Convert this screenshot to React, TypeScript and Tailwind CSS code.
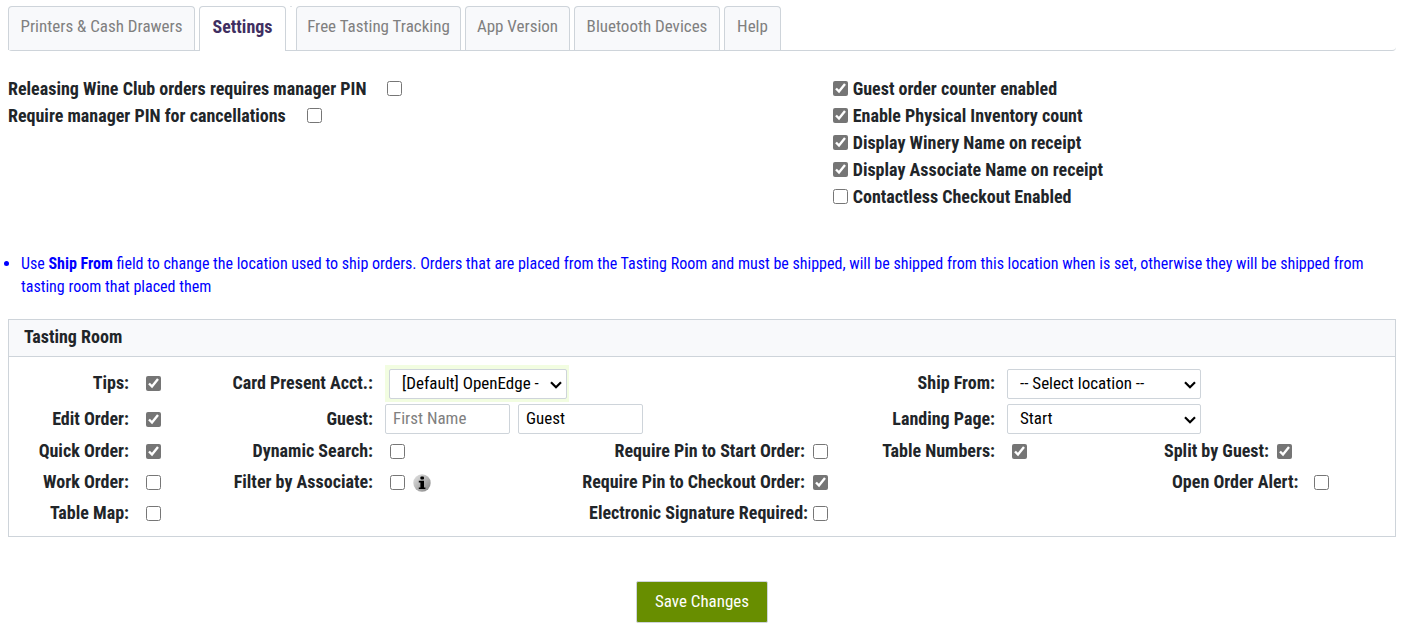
import { useState } from 'react';

const tabs = [
  { name: 'Printers & Cash Drawers', width: 'w-[187px]' },
  { name: 'Settings', width: 'w-[87px]' },
  { name: 'Free Tasting Tracking', width: 'w-[165px]' },
  { name: 'App Version', width: 'w-[105px]' },
  { name: 'Bluetooth Devices', width: 'w-[146px]' },
  { name: 'Help', width: 'w-[57px]' },
];

function Check({ id, checked = false }: { id: string; checked?: boolean }) {
  return <input id={id} type="checkbox" defaultChecked={checked} className="size-[15px] shrink-0 accent-[#757575]" />;
}

function Select({ id, option }: { id: string; option: string }) {
  return (
    <div className="relative w-full">
      <select id={id} className="block h-[30px] w-full appearance-none rounded-[2px] border border-[#ced4da] bg-white pr-6 pb-[3px] pl-3 text-[17px] text-black">
        <option>{option}</option>
      </select>
      <svg viewBox="0 0 12 8" className="pointer-events-none absolute top-3 right-[5px] h-2 w-3" fill="none" stroke="#000" strokeWidth="2.2">
        <path d="M1 1.2 6 6.2 11 1.2" />
      </svg>
    </div>
  );
}

function InfoIcon() {
  return (
    <svg viewBox="0 0 18 18" className="size-[18px]" role="img" aria-label="Info">
      <defs>
        <linearGradient id="info-fill" x1="0" y1="0" x2="1" y2="1">
          <stop offset="0" stopColor="#e6e6e6" />
          <stop offset="1" stopColor="#858585" />
        </linearGradient>
      </defs>
      <circle cx="9" cy="9" r="8.7" fill="url(#info-fill)" />
      <rect x="7.4" y="2.6" width="3.6" height="3" rx="1" />
      <path d="M5.8 6.8H11V13.4h1.4V15H5.8v-1.6h1.6V8.4H5.8z" />
    </svg>
  );
}

export default function App() {
  const [active, setActive] = useState('Settings');

  return (
    <main className="px-2 pt-[6px] pb-4 font-['Roboto_Condensed','Liberation_Sans_Narrow','Liberation_Sans',sans-serif] text-lg leading-[27px] whitespace-nowrap text-[#212529]">
      <nav className="mr-px flex h-[45px] gap-1 rounded-b border-b border-[#ced4da]">
        {tabs.map((tab) => (
          <div key={tab.name} className="flex gap-1">
            <button
              type="button"
              onClick={() => setActive(tab.name)}
              className={`${tab.width} rounded-t border border-b-0 border-[#ced4da] ${
                active === tab.name ? 'h-[45px] bg-white pb-[6px] font-bold text-[#3f2f61]' : 'h-[44px] bg-[#f8f9fb] pb-1 text-[17px] text-[#808080]'
              }`}
            >
              {tab.name}
            </button>
            {tab.name === 'Settings' && <span className="h-px w-[2px] bg-[#dee2e6]" />}
          </div>
        ))}
      </nav>

      <section className="mt-6 grid grid-cols-[19fr_13fr] font-bold">
        <div>
          <div className="flex h-[27px] items-center gap-[21px]">
            <label htmlFor="release-pin">Releasing Wine Club orders requires manager PIN</label>
            <Check id="release-pin" />
          </div>
          <div className="flex h-[27px] items-center gap-[21px]">
            <label htmlFor="cancel-pin">Require manager PIN for cancellations</label>
            <Check id="cancel-pin" />
          </div>
        </div>
        <div>
          <div className="flex h-[27px] items-center gap-[5px]">
            <Check id="guest-counter" checked />
            <label htmlFor="guest-counter">Guest order counter enabled</label>
          </div>
          <div className="flex h-[27px] items-center gap-[5px]">
            <Check id="inventory" checked />
            <label htmlFor="inventory">Enable Physical Inventory count</label>
          </div>
          <div className="flex h-[27px] items-center gap-[5px]">
            <Check id="winery-name" checked />
            <label htmlFor="winery-name">Display Winery Name on receipt</label>
          </div>
          <div className="flex h-[27px] items-center gap-[5px]">
            <Check id="associate-name" checked />
            <label htmlFor="associate-name">Display Associate Name on receipt</label>
          </div>
          <div className="flex h-[27px] items-center gap-[5px]">
            <Check id="contactless" />
            <label htmlFor="contactless">Contactless Checkout Enabled</label>
          </div>
        </div>
      </section>

      <ul className="mt-[42px] list-disc pl-[13px] text-base leading-[23px] whitespace-normal text-[#0000ff]">
        <li>
          Use <b>Ship From</b> field to change the location used to ship orders. Orders that are placed from the Tasting
          Room and must be shipped, will be shipped from this location when is set, otherwise they will be shipped from
          tasting room that placed them
        </li>
      </ul>

      <section className="mt-[21px] mr-px border border-[#ced4da]">
        <h2 className="h-[37px] border-b border-[#ced4da] bg-[#f8f9fb] pt-[3px] pl-[15px] font-bold">Tasting Room</h2>
        <div className="grid grid-cols-[120fr_100fr_144fr_207fr_248fr_167fr_169fr_231fr] grid-rows-[37px_34px_31px_31px_31px] items-center pt-2 pb-[7px] [&_label]:pb-[2px]">
          <label htmlFor="tips" className="text-right font-bold">Tips:</label>
          <div className="flex pl-[17px]"><Check id="tips" checked /></div>
          <label htmlFor="card-acct" className="text-right font-bold">Card Present Acct.:</label>
          <div className="col-span-2 pl-3">
            <div className="flex h-[37px] w-[184px] items-center bg-[#f2fde1] pr-[2px] pl-1">
              <Select id="card-acct" option="[Default] OpenEdge - " />
            </div>
          </div>
          <label htmlFor="ship-from" className="text-right font-bold">Ship From:</label>
          <div className="col-span-2 flex w-[206px] pl-3">
            <Select id="ship-from" option="-- Select location --" />
          </div>

          <label htmlFor="edit-order" className="text-right font-bold">Edit Order:</label>
          <div className="flex pl-[17px]"><Check id="edit-order" checked /></div>
          <label htmlFor="guest-first" className="text-right font-bold">Guest:</label>
          <div className="col-span-2 flex gap-2 pl-3">
            <input id="guest-first" placeholder="First Name" className="h-[30px] w-[125px] rounded-[2px] border border-[#ced4da] px-[7px] pb-[3px] text-[17px] text-black placeholder:text-[#808080]" />
            <input aria-label="Last Name" defaultValue="Guest" className="h-[30px] w-[125px] rounded-[2px] border border-[#ced4da] px-[7px] pb-[3px] text-[17px] text-black" />
          </div>
          <label htmlFor="landing" className="text-right font-bold">Landing Page:</label>
          <div className="col-span-2 flex w-[206px] pl-3">
            <Select id="landing" option="Start" />
          </div>

          <label htmlFor="quick-order" className="text-right font-bold">Quick Order:</label>
          <div className="flex pl-[17px]"><Check id="quick-order" checked /></div>
          <label htmlFor="dynamic-search" className="text-right font-bold">Dynamic Search:</label>
          <div className="flex pl-[17px]"><Check id="dynamic-search" /></div>
          <div className="flex items-center justify-end gap-2 font-bold">
            <label htmlFor="pin-start">Require Pin to Start Order:</label>
            <Check id="pin-start" />
          </div>
          <label htmlFor="table-numbers" className="text-right font-bold">Table Numbers:</label>
          <div className="flex pl-[17px]"><Check id="table-numbers" checked /></div>
          <div className="flex items-center gap-2 font-bold">
            <label htmlFor="split-guest">Split by Guest:</label>
            <Check id="split-guest" checked />
          </div>

          <label htmlFor="work-order" className="text-right font-bold">Work Order:</label>
          <div className="flex pl-[17px]"><Check id="work-order" /></div>
          <label htmlFor="filter-associate" className="text-right font-bold">Filter by Associate:</label>
          <div className="flex items-center gap-2 pl-[17px]">
            <Check id="filter-associate" />
            <InfoIcon />
          </div>
          <div className="flex items-center justify-end gap-2 font-bold">
            <label htmlFor="pin-checkout">Require Pin to Checkout Order:</label>
            <Check id="pin-checkout" checked />
          </div>
          <div className="col-start-8 flex items-center gap-4 pl-2 font-bold">
            <label htmlFor="open-alert">Open Order Alert:</label>
            <Check id="open-alert" />
          </div>

          <label htmlFor="table-map" className="text-right font-bold">Table Map:</label>
          <div className="flex pl-[17px]"><Check id="table-map" /></div>
          <div className="col-start-5 flex items-center justify-end gap-[5px] font-bold">
            <label htmlFor="signature">Electronic Signature Required:</label>
            <Check id="signature" />
          </div>
        </div>
      </section>

      <div className="mt-11 mr-px flex justify-center">
        <button type="button" className="h-[42px] w-[132px] rounded-[2px] border border-[#ced4da] bg-[#688e00] pb-[2px] text-[17px] text-white">
          Save Changes
        </button>
      </div>
    </main>
  );
}
